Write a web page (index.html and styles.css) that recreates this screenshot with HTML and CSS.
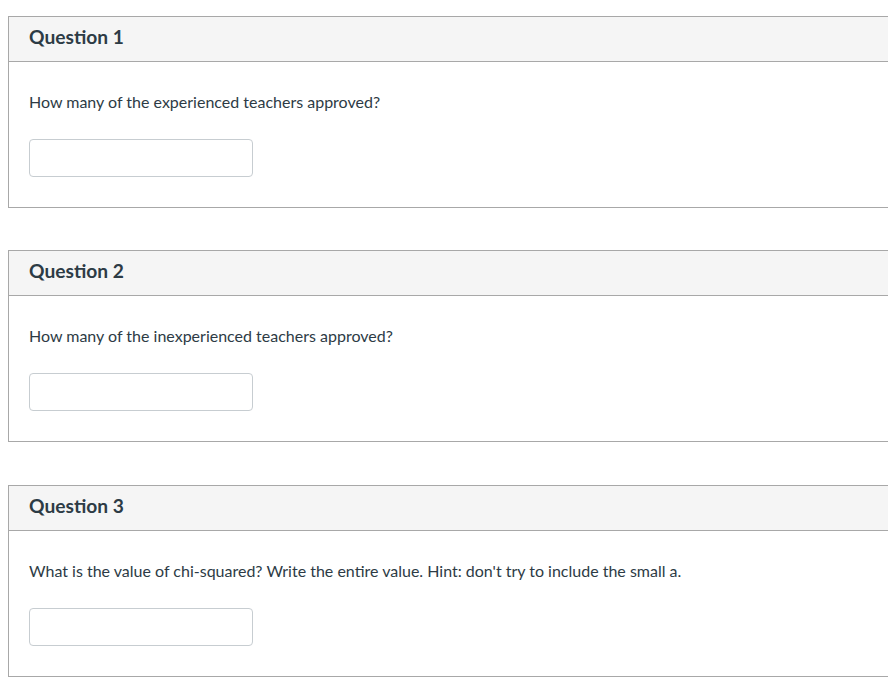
FILE: index.html
```html
<!DOCTYPE html>
<html lang="en">
<head>
<meta charset="utf-8">
<title>Quiz</title>
<link rel="stylesheet" href="styles.css">
</head>
<body>
  <div class="quiz">
    <section class="question">
      <div class="question-header">Question 1</div>
      <div class="question-body">
        <p class="question-text">How many of the experienced teachers approved?</p>
        <input class="answer" type="text" aria-label="Answer">
      </div>
    </section>
    <section class="question">
      <div class="question-header">Question 2</div>
      <div class="question-body">
        <p class="question-text">How many of the inexperienced teachers approved?</p>
        <input class="answer" type="text" aria-label="Answer">
      </div>
    </section>
    <section class="question question-last">
      <div class="question-header">Question 3</div>
      <div class="question-body">
        <p class="question-text">What is the value of chi-squared? Write the entire value. Hint: don't try to include the small a.</p>
        <input class="answer" type="text" aria-label="Answer">
      </div>
    </section>
  </div>
</body>
</html>
```
FILE: styles.css
```css
html {
  overflow: hidden;
  background: #ffffff;
}
body {
  margin: 0;
  padding: 16px 0 0 8px;
  font-family: Lato, "Noto Sans", sans-serif;
  color: #2d3b45;
}
.quiz {
  display: flex;
  flex-direction: column;
  gap: 42px;
  width: 940px;
}
.question {
  border: 1px solid #a8a8a8;
  background: #ffffff;
}
.question-last {
  margin-top: 1px;
}
.question-header {
  background: #f5f5f5;
  border-bottom: 1px solid #a8a8a8;
  font-size: 19.2px;
  font-weight: 700;
  line-height: 27px;
  height: 45px;
  box-sizing: border-box;
  padding: 6px 20px 11px 20px;
}
.question-body {
  padding: 28px 20px 30px 20px;
}
.question-text {
  margin: 0 0 25px 0;
  font-size: 16px;
  line-height: 24px;
}
.answer {
  display: block;
  box-sizing: border-box;
  width: 224px;
  height: 38px;
  margin: 0;
  border: 1px solid #c7cdd1;
  border-radius: 4px;
  background: #ffffff;
  padding: 0 8px;
  font-family: Lato, sans-serif;
  font-size: 16px;
}
```
